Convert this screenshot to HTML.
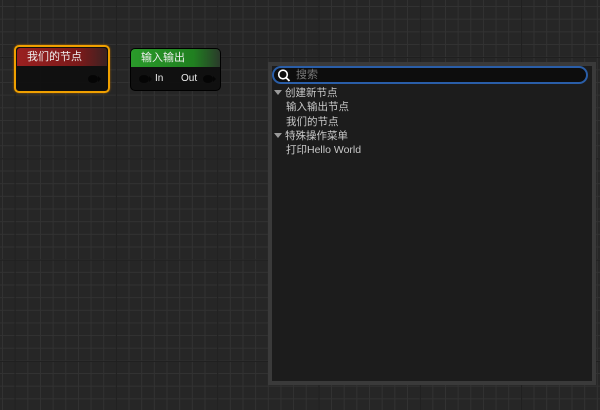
<!DOCTYPE html>
<html><head><meta charset="utf-8"><style>
*{margin:0;padding:0;box-sizing:border-box}
body{width:600px;height:410px;overflow:hidden;position:relative;background:#262626;
font-family:"Liberation Sans","Noto Sans CJK SC",sans-serif;
background-image:
linear-gradient(90deg,#1f1f1f 1px,transparent 1px),
linear-gradient(0deg,#1f1f1f 1px,transparent 1px),
linear-gradient(90deg,#323232 1px,transparent 1px),
linear-gradient(0deg,#323232 1px,transparent 1px);
background-size:101.3px 101.3px,101.3px 101.3px,12.66px 12.66px,12.66px 12.66px;
background-position:14.6px 0,0 58px,2px 0,0 7px;}
.node{position:absolute;border-radius:5px;background:rgba(14,14,14,.92);}
.hd{height:18px;border-radius:4px 4px 0 0;color:#eee;font-size:11px;line-height:18px;padding-left:9px}
.pin{position:absolute;width:10px;height:8px;border-radius:50%;background:#050505;}
.pin:after{content:"";position:absolute;right:-3px;top:1px;border-left:3px solid #050505;border-top:3px solid transparent;border-bottom:3px solid transparent}
.panel{position:absolute;left:268px;top:62px;width:328px;height:323px;background:#3a3a3a;padding:4px}
.inner{background:#1c1c1c;width:100%;height:100%;position:relative}
.search{position:absolute;left:0;top:0;width:316px;height:18px;border:2px solid #2a5ea8;border-radius:9px;background:#0d0d0d;color:#777;font-size:11px;line-height:14px;padding-left:22px}
.item{position:absolute;color:#c8c8c8;font-size:10.5px;line-height:12px}
.tri{display:inline-block;width:0;height:0;border-left:4px solid transparent;border-right:4px solid transparent;border-top:5px solid #999;margin-right:3px;vertical-align:1px}
</style></head><body>
<div class="node" style="left:14px;top:45px;width:96px;height:48px;border:2px solid #f0a000;box-shadow:0 0 2px #a06000">
<div class="hd" style="background:linear-gradient(90deg,#9a2020,#7a1a1a 70%,#3a2222);margin:1px;border-radius:3px 3px 0 0;padding-left:10px">我们的节点</div>
<div class="pin" style="left:72px;top:28px"></div>
</div>
<div class="node" style="left:130px;top:48px;width:91px;height:43px;border:1px solid #000">
<div class="hd" style="background:linear-gradient(90deg,#2a9a2a,#208020 70%,#2a3a2a);padding-left:10px">输入输出</div>
<div class="pin" style="left:8px;top:26px"></div>
<div style="position:absolute;left:24px;top:24px;color:#eee;font-size:10px">In</div>
<div style="position:absolute;left:50px;top:24px;color:#eee;font-size:10px">Out</div>
<div class="pin" style="left:72px;top:26px"></div>
</div>
<div class="panel"><div class="inner">
<div class="search"><svg style="position:absolute;left:3px;top:1px" width="14" height="13" viewBox="0 0 14 13"><circle cx="6" cy="5.5" r="4.3" fill="none" stroke="#fff" stroke-width="1.6"/><line x1="9" y1="8.5" x2="12.5" y2="12" stroke="#fff" stroke-width="1.8"/></svg>搜索</div>
<div class="item" style="left:2px;top:21px"><span class="tri"></span>创建新节点</div>
<div class="item" style="left:14px;top:35px">输入输出节点</div>
<div class="item" style="left:14px;top:50px">我们的节点</div>
<div class="item" style="left:2px;top:64px"><span class="tri"></span>特殊操作菜单</div>
<div class="item" style="left:14px;top:78px">打印Hello World</div>
</div></div>
</body></html>
